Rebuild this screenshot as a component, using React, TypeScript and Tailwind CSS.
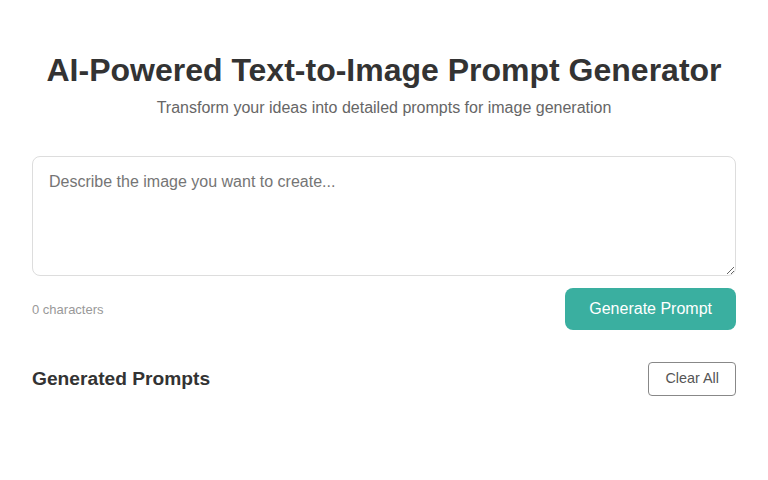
import { useState } from "react";

export default function App() {
  const [text, setText] = useState("");

  return (
    <div className="min-h-screen bg-white font-['Liberation_Sans',Arial,sans-serif] text-[#333]">
      <div className="mx-auto max-w-[768px] px-8 pt-[50px]">
        <header className="text-center">
          <h1 className="text-[32px] font-bold leading-[40px] text-[#333]">
            AI-Powered Text-to-Image Prompt Generator
          </h1>
          <p className="mt-[8px] text-base leading-5 text-[#666]">
            Transform your ideas into detailed prompts for image generation
          </p>
        </header>

        <div className="mt-[38px]">
          <textarea
            value={text}
            onChange={(e) => setText(e.target.value)}
            placeholder="Describe the image you want to create..."
            className="block h-[120px] w-full rounded-lg border border-[#ddd] px-4 py-[13px] text-base text-[#333] placeholder:text-[#757575] outline-none"
          />
          <div className="mt-3 flex items-center justify-between">
            <span className="pt-[1px] text-[13px] text-[#999]">{text.length} characters</span>
            <button className="h-[42px] rounded-lg bg-[#3aafa0] px-6 text-base text-white">
              Generate Prompt
            </button>
          </div>
        </div>

        <div className="mt-8 flex items-center justify-between">
          <h2 className="text-[19.2px] font-bold text-[#333]">Generated Prompts</h2>
          <button className="h-[34px] rounded border border-[#888] px-4 text-[14.4px] text-[#555]">
            Clear All
          </button>
        </div>
      </div>
    </div>
  );
}
